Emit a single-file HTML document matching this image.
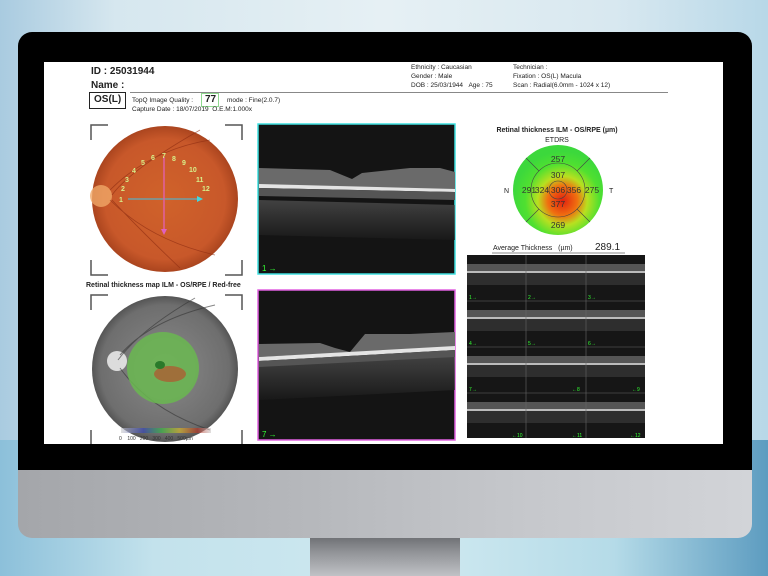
<!DOCTYPE html>
<html><head><meta charset="utf-8"><style>
*{margin:0;padding:0;box-sizing:border-box}
body{width:768px;height:576px;overflow:hidden;position:relative;font-family:"Liberation Sans",sans-serif;
background:linear-gradient(90deg,#a9cbe0 0%,#d6e7ef 15%,#e6f0f4 50%,#d8e8f0 80%,#b8d8e8 100%)}
.abs{position:absolute}
.t{position:absolute;white-space:nowrap;color:#222}
</style></head><body>
<div class="abs" style="left:0;top:440px;width:768px;height:136px;background:linear-gradient(90deg,#8cc0da 0%,#c3e2ec 20%,#cfe9f0 55%,#b5dbe8 80%,#5d9cc0 100%)"></div>
<!-- stand -->
<div class="abs" style="left:310px;top:530px;width:150px;height:46px;background:linear-gradient(180deg,#5e6064 0%,#8e9094 45%,#c0c2c6 100%)"></div>
<!-- chin -->
<div class="abs" style="left:18px;top:440px;width:734px;height:98px;border-radius:0 0 14px 14px;background:linear-gradient(90deg,#a4a6aa 0%,#b6b8bc 40%,#c6c8cc 70%,#d2d4d8 100%)"></div>
<!-- bezel -->
<div class="abs" style="left:18px;top:32px;width:734px;height:438px;background:#000;border-radius:14px 14px 0 0"></div>
<!-- screen -->
<div class="abs" style="left:44px;top:62px;width:679px;height:382px;background:#fff"></div>
<div class="t" style="left:91px;top:66px;font-size:10px;font-weight:bold">ID : 25031944</div>
<div class="t" style="left:91px;top:80px;font-size:10px;font-weight:bold">Name :</div>
<div class="abs" style="left:89px;top:92px;width:37px;height:17px;border:1.5px solid #222"></div>
<div class="t" style="left:94px;top:94px;font-size:10px;font-weight:bold">OS(L)</div>
<div class="abs" style="left:130px;top:92px;width:538px;height:1px;background:#888"></div>
<div class="t" style="left:132px;top:97px;font-size:6.5px">TopQ Image Quality :</div>
<div class="abs" style="left:201px;top:93px;width:18px;height:14px;border:1.5px solid #8fd98f"></div>
<div class="t" style="left:205px;top:94px;font-size:10px;font-weight:bold">77</div>
<div class="t" style="left:227px;top:97px;font-size:6.5px">mode : Fine(2.0.7)</div>
<div class="t" style="left:132px;top:106px;font-size:6.5px">Capture Date : 18/07/2019 &nbsp;O.E.M:1.000x</div>
<div class="t" style="left:411px;top:63px;font-size:6.5px;line-height:9px">Ethnicity : Caucasian<br>Gender : Male<br>DOB : 25/03/1944 &nbsp;&nbsp;Age : 75</div>
<div class="t" style="left:513px;top:63px;font-size:6.5px;line-height:9px">Technician :<br>Fixation : OS(L) Macula<br>Scan : Radial(6.0mm - 1024 x 12)</div>

<svg class="abs" style="left:0;top:0" width="768" height="576">
<defs>
<radialGradient id="fg" cx="0.5" cy="0.5" r="0.55"><stop offset="0" stop-color="#d0622a"/><stop offset="0.75" stop-color="#c8582a"/><stop offset="1" stop-color="#9a3a18"/></radialGradient>
<radialGradient id="gg" cx="0.5" cy="0.5" r="0.55"><stop offset="0" stop-color="#8a8a8a"/><stop offset="0.8" stop-color="#6e6e6e"/><stop offset="1" stop-color="#404040"/></radialGradient>
<radialGradient id="et" cx="0.55" cy="0.62" r="0.55"><stop offset="0" stop-color="#e02010"/><stop offset="0.3" stop-color="#f07010"/><stop offset="0.5" stop-color="#b8e020"/><stop offset="0.75" stop-color="#50e030"/><stop offset="1" stop-color="#3cd83c"/></radialGradient>
<linearGradient id="bar" x1="0" x2="1"><stop offset="0" stop-color="#ccc"/><stop offset="0.25" stop-color="#3040c0"/><stop offset="0.45" stop-color="#30c040"/><stop offset="0.65" stop-color="#e0c020"/><stop offset="0.85" stop-color="#c03020"/><stop offset="1" stop-color="#ccc"/></linearGradient>
<linearGradient id="ch" x1="0" y1="0" x2="0" y2="1"><stop offset="0" stop-color="#555"/><stop offset="1" stop-color="#1a1a1a"/></linearGradient>
<clipPath id="sc"><rect x="44" y="62" width="679" height="382"/></clipPath>
</defs>
<g clip-path="url(#sc)">
<g stroke="#555" stroke-width="1.5" fill="none">
<path d="M91 140V125H108M225 125H242V140M91 260V275H108M225 275H242V260"/>
<path d="M91 310V295H108M225 295H242V310M91 430V444M242 430V444"/>
</g>
<circle cx="165" cy="199" r="73" fill="url(#fg)"/>
<circle cx="101" cy="196" r="11" fill="#f0a868" opacity="0.8"/>
<g stroke="#8a2a10" stroke-width="0.8" fill="none" opacity="0.6">
<path d="M110 190Q150 150 210 140M110 200Q150 240 215 255M112 195Q130 170 200 130M112 200Q140 230 180 268"/>
</g>
<line x1="128" y1="199" x2="197" y2="199" stroke="#6fa0a8" stroke-width="1.5"/>
<path d="M197 196L203 199L197 202Z" fill="#3fd8e0"/>
<line x1="164" y1="157" x2="164" y2="230" stroke="#e060a0" stroke-width="1.5"/>
<path d="M161 229L164 235L167 229Z" fill="#e060c0"/>
<g font-size="7" font-weight="bold" fill="#d8f08a" font-family="Liberation Sans">
<text x="119" y="202">1</text><text x="121" y="191">2</text><text x="125" y="182">3</text><text x="132" y="173">4</text><text x="141" y="165">5</text><text x="151" y="160">6</text><text x="162" y="158">7</text><text x="172" y="161">8</text><text x="182" y="165">9</text><text x="189" y="172">10</text><text x="196" y="182">11</text><text x="202" y="191">12</text>
</g>
<text x="86" y="287" font-size="7" font-weight="bold" fill="#222" font-family="Liberation Sans">Retinal thickness map ILM - OS/RPE / Red-free</text>
<circle cx="165" cy="369" r="73" fill="url(#gg)"/>
<circle cx="117" cy="361" r="10" fill="#e8e8e8" opacity="0.9"/>
<g stroke="#333" stroke-width="1" fill="none" opacity="0.6"><path d="M120 355Q150 320 215 305M120 368Q150 410 210 430M118 360Q140 330 195 298"/></g>
<circle cx="163" cy="368" r="36" fill="#6ab850" opacity="0.85"/>
<ellipse cx="170" cy="374" rx="16" ry="8" fill="#b05a30" opacity="0.75"/>
<ellipse cx="160" cy="365" rx="5" ry="4" fill="#2a7a2a"/>
<rect x="121" y="428" width="90" height="5" fill="url(#bar)" opacity="0.6"/>
<text x="119" y="440" font-size="5" fill="#333" font-family="Liberation Sans">0 &#160;&#160;&#160;100 &#160;&#160;200 &#160;&#160;300 &#160;&#160;400 &#160;&#160;500µm</text>
<!-- OCT 1 -->
<rect x="258" y="124" width="197" height="150" fill="#141414" stroke="#3fe0e0" stroke-width="1.5"/>
<path d="M259 200L455 205V240L259 235Z" fill="url(#ch)" opacity="0.7"/>
<path d="M259 168L330 170L352 179L362 173L410 168L440 168L455 172V190L259 186Z" fill="#6a6a6a"/>
<path d="M259 184L455 189V192L259 188Z" fill="#e4e4e4"/>
<path d="M259 188L455 192V200L259 196Z" fill="#555"/>
<text x="262" y="271" font-size="8" fill="#3f3" font-family="Liberation Sans">1 →</text>
<!-- OCT 7 -->
<rect x="258" y="290" width="197" height="150" fill="#141414" stroke="#e060e0" stroke-width="1.5"/>
<path d="M259 366L455 356V390L259 400Z" fill="url(#ch)" opacity="0.7"/>
<path d="M259 344L320 343L335 348L350 352L365 334L410 334L455 332V347L259 357Z" fill="#6a6a6a"/>
<path d="M259 357L455 346V350L259 361Z" fill="#e4e4e4"/>
<path d="M259 361L455 350V357L259 367Z" fill="#555"/>
<text x="262" y="437" font-size="8" fill="#3f3" font-family="Liberation Sans">7 →</text>
<!-- ETDRS -->
<text x="557" y="132" font-size="7" font-weight="bold" text-anchor="middle" fill="#222" font-family="Liberation Sans">Retinal thickness ILM - OS/RPE (µm)</text>
<text x="557" y="142" font-size="7" text-anchor="middle" fill="#222" font-family="Liberation Sans">ETDRS</text>
<circle cx="558" cy="190" r="45" fill="url(#et)"/>
<g stroke="#444" stroke-width="0.6" fill="none"><circle cx="558" cy="190" r="27"/><circle cx="558" cy="190" r="9"/>
<path d="M539 171L526 158M577 171L590 158M539 209L526 222M577 209L590 222"/></g>
<g font-size="8.5" fill="#333" text-anchor="middle" font-family="Liberation Sans">
<text x="558" y="162">257</text><text x="558" y="178">307</text><text x="529" y="193">291</text><text x="542" y="193">324</text><text x="558" y="193">306</text><text x="574" y="193">356</text><text x="592" y="193">275</text><text x="558" y="207">377</text><text x="558" y="228">269</text>
</g>
<text x="504" y="193" font-size="7" fill="#222" font-family="Liberation Sans">N</text>
<text x="609" y="193" font-size="7" fill="#222" font-family="Liberation Sans">T</text>
<text x="493" y="250" font-size="7" fill="#222" font-family="Liberation Sans">Average Thickness &#160;&#160;(µm)</text>
<text x="595" y="250" font-size="10" fill="#222" font-family="Liberation Sans">289.1</text>
<line x1="492" y1="253" x2="625" y2="253" stroke="#888" stroke-width="1"/>
<!-- grid -->
<rect x="467" y="255" width="178" height="183" fill="#161616"/>
<g fill="#555"><path d="M467 264H645V271H467Z"/><path d="M467 310H645V317H467Z"/><path d="M467 356H645V363H467Z"/><path d="M467 402H645V409H467Z"/></g>
<g fill="#bbb"><path d="M467 271H645V273H467Z"/><path d="M467 317H645V319H467Z"/><path d="M467 363H645V365H467Z"/><path d="M467 409H645V411H467Z"/></g>
<g fill="#2e2e2e"><path d="M467 273H645V285H467Z"/><path d="M467 319H645V331H467Z"/><path d="M467 365H645V377H467Z"/><path d="M467 411H645V423H467Z"/></g>
<g stroke="#666" stroke-width="0.6"><path d="M526 255V438M586 255V438M467 301H645M467 347H645M467 393H645"/></g>
<g font-size="5" fill="#3f3" font-family="Liberation Sans">
<text x="469" y="299">1→</text><text x="528" y="299">2→</text><text x="588" y="299">3→</text>
<text x="469" y="345">4→</text><text x="528" y="345">5→</text><text x="588" y="345">6→</text>
<text x="469" y="391">7→</text><text x="572" y="391">←8</text><text x="632" y="391">←9</text>
<text x="512" y="437">←10</text><text x="572" y="437">←11</text><text x="630" y="437">←12</text>
</g>
</g>
</svg>
</body></html>
